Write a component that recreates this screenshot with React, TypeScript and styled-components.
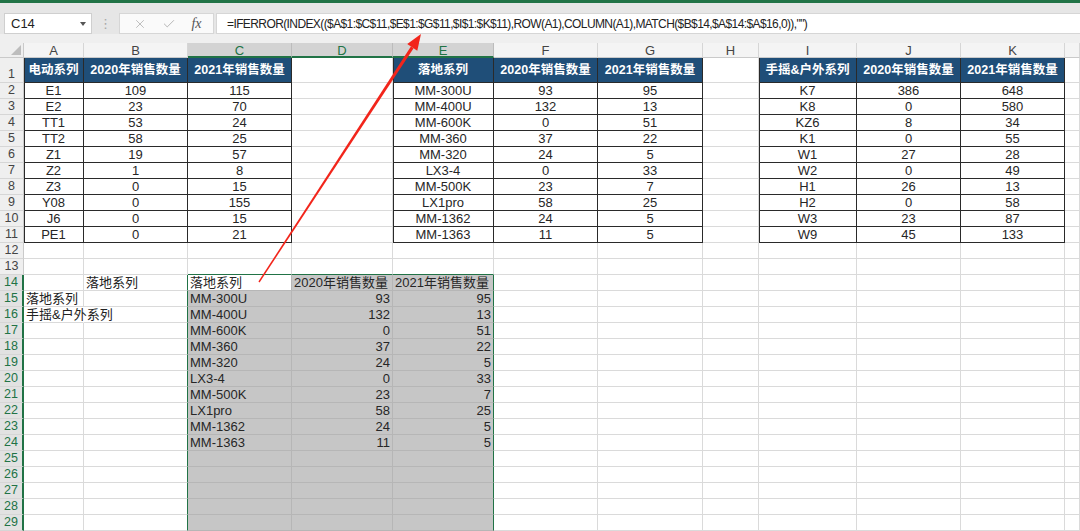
import React from 'react'
import styled, { createGlobalStyle } from 'styled-components'
import { X, Check } from 'lucide-react'

const GREEN = '#217346'
const FONT = `'Liberation Sans', 'Noto Sans CJK SC', sans-serif`

const GlobalStyle = createGlobalStyle`
  html, body { margin: 0; padding: 0; background: #fff; overflow: hidden; }
  body { font-family: ${FONT}; }
`

// last column is only a sliver at the right edge, its letter is out of view
const COLS = [24, 60, 104, 104, 101, 101, 104, 105, 56, 98, 104, 104, 15]
const LETTERS = ['A', 'B', 'C', 'D', 'E', 'F', 'G', 'H', 'I', 'J', 'K', '']
const ROWS = 29

const HEAD = ['2020年销售数量', '2021年销售数量']

const tables = [
  {
    col: 0,
    title: '电动系列',
    rows: [
      ['E1', '109', '115'], ['E2', '23', '70'], ['TT1', '53', '24'], ['TT2', '58', '25'], ['Z1', '19', '57'],
      ['Z2', '1', '8'], ['Z3', '0', '15'], ['Y08', '0', '155'], ['J6', '0', '15'], ['PE1', '0', '21'],
    ],
  },
  {
    col: 4,
    title: '落地系列',
    rows: [
      ['MM-300U', '93', '95'], ['MM-400U', '132', '13'], ['MM-600K', '0', '51'], ['MM-360', '37', '22'],
      ['MM-320', '24', '5'], ['LX3-4', '0', '33'], ['MM-500K', '23', '7'], ['LX1pro', '58', '25'],
      ['MM-1362', '24', '5'], ['MM-1363', '11', '5'],
    ],
  },
  {
    col: 8,
    title: '手摇&户外系列',
    rows: [
      ['K7', '386', '648'], ['K8', '0', '580'], ['KZ6', '8', '34'], ['K1', '0', '55'], ['W1', '27', '28'],
      ['W2', '0', '49'], ['H1', '26', '13'], ['H2', '0', '58'], ['W3', '23', '87'], ['W9', '45', '133'],
    ],
  },
]

type Tone = 'plain' | 'table' | 'head' | 'sel' | 'active'
type Align = 'left' | 'center' | 'right'

interface Spec {
  text?: string
  tone: Tone
  align: Align
  right?: string
  bottom?: string
  left?: string
}

const toneStyle: Record<Tone, { bg: string; line: string; color: string }> = {
  plain: { bg: 'transparent', line: '#dadada', color: '#222' },
  table: { bg: '#fff', line: '#2a2a2a', color: '#262626' },
  head: { bg: '#1f4e78', line: '#2a2a2a', color: '#fff' },
  sel: { bg: '#c6c6c6', line: '#b6b6b6', color: '#262626' },
  active: { bg: '#fff', line: '#b6b6b6', color: '#262626' },
}

// selection C14:E29, column index 2..4
const inSel = (r: number, c: number) => r >= 14 && c >= 2 && c <= 4

function cellAt(r: number, c: number): Spec {
  for (const t of tables) {
    if (r <= 11 && c >= t.col && c <= t.col + 2) {
      const i = c - t.col
      const left = i === 0 ? '#2a2a2a' : undefined
      if (r === 1) return { tone: 'head', align: 'center', text: i === 0 ? t.title : HEAD[i - 1], left }
      return { tone: 'table', align: 'center', text: t.rows[r - 2][i], left }
    }
  }
  const spec: Spec = { tone: 'plain', align: 'left' }
  if (inSel(r, c)) {
    spec.tone = r === 14 && c === 2 ? 'active' : 'sel'
    if (c === 4) spec.right = GREEN
    if (r === 14) {
      spec.text = c === 2 ? '落地系列' : HEAD[c - 3]
    } else if (r <= 24) {
      const row = tables[1].rows[r - 15]
      spec.text = row[c - 2]
      if (c > 2) spec.align = 'right'
    }
  }
  if (r === 13 && c >= 2 && c <= 4) spec.bottom = GREEN
  if (r >= 14 && c === 1) spec.right = GREEN
  if (r === 14 && c === 1) spec.text = '落地系列'
  if (r === 15 && c === 0) spec.text = '落地系列'
  if (r === 16 && c === 0) {
    spec.text = '手摇&户外系列'
    spec.right = 'transparent'
  }
  return spec
}

const Page = styled.div`
  position: relative;
  width: 1080px;
  height: 531px;
  overflow: hidden;
  display: flex;
  flex-direction: column;
`

const TopStripe = styled.div`
  height: 3px;
  background: ${GREEN};
`

const FormulaRow = styled.div`
  height: 31px;
  box-sizing: border-box;
  padding: 10px 0 0 4px;
  background: #e6e6e6;
  display: flex;
  align-items: flex-start;
`

const Band = styled.div`
  height: 9px;
  background: #efefef;
`

const NameBox = styled.div`
  width: 88px;
  height: 21px;
  box-sizing: border-box;
  background: #fff;
  border: 1px solid #cfcfcf;
  display: flex;
  align-items: center;
  justify-content: space-between;
  padding: 0 5px 0 6px;
  font-size: 13px;
  color: #222;
`

const Caret = styled.span`
  width: 0;
  height: 0;
  border-left: 3px solid transparent;
  border-right: 3px solid transparent;
  border-top: 4px solid #555;
`

const Grip = styled.div`
  width: 27px;
  height: 21px;
  display: flex;
  align-items: center;
  justify-content: center;
  color: #a8a8a8;
  font-family: 'DejaVu Sans', sans-serif;
  font-size: 13px;
`

const FxBox = styled.div`
  width: 95px;
  height: 21px;
  box-sizing: border-box;
  background: #fafafa;
  border: 1px solid #d6d6d6;
  display: flex;
  align-items: center;
  justify-content: space-around;
  padding: 0 4px 0 6px;
  color: #b0b0b0;
`

const Fx = styled.span`
  font-family: 'Liberation Serif', serif;
  font-style: italic;
  font-size: 14px;
  color: #555;
`

const FormulaInput = styled.div`
  flex: 1;
  margin-left: 2px;
  height: 21px;
  box-sizing: border-box;
  background: #fff;
  border: 1px solid #d6d6d6;
  border-right: none;
  padding-left: 10px;
  display: flex;
  align-items: center;
  font-size: 12px;
  letter-spacing: -0.6px;
  color: #222;
  white-space: nowrap;
  overflow: hidden;
`

const Sheet = styled.div`
  display: grid;
  grid-template-columns: ${COLS.map((w) => `${w}px`).join(' ')};
  grid-template-rows: 15px 25px repeat(${ROWS - 1}, 16px);
  background: #fff;
`

const Corner = styled.div`
  position: relative;
  box-sizing: border-box;
  background: #efefef;
  border-right: 1px solid #cacaca;
  border-bottom: 1px solid #cacaca;
  display: flex;
  align-items: flex-end;
  justify-content: flex-end;
  padding: 0 2px 2px 0;
  &::after {
    content: '';
    width: 0;
    height: 0;
    border-left: 10px solid transparent;
    border-bottom: 10px solid #bdbdbd;
  }
`

const ColHead = styled.div<{ $sel?: boolean }>`
  box-sizing: border-box;
  background: ${(p) => (p.$sel ? '#d3d3d3' : '#f4f4f4')};
  border-right: 1px solid ${(p) => (p.$sel ? '#bcbcbc' : '#d6d6d6')};
  border-bottom: ${(p) => (p.$sel ? `2px solid ${GREEN}` : '1px solid #cacaca')};
  color: ${(p) => (p.$sel ? GREEN : '#444')};
  font-size: 13px;
  line-height: 15px;
  text-align: center;
`

const RowHead = styled.div<{ $sel?: boolean }>`
  box-sizing: border-box;
  background: ${(p) => (p.$sel ? '#e2e2e2' : '#efefef')};
  border-right: ${(p) => (p.$sel ? `2px solid ${GREEN}` : '1px solid #cacaca')};
  border-bottom: 1px solid #d6d6d6;
  color: ${(p) => (p.$sel ? GREEN : '#444')};
  font-size: 12.5px;
  display: flex;
  align-items: flex-end;
  justify-content: center;
  line-height: 15px;
`

const Cell = styled.div<{ $tone: Tone; $align: Align; $right?: string; $bottom?: string; $left?: string }>`
  box-sizing: border-box;
  min-width: 0;
  background: ${(p) => toneStyle[p.$tone].bg};
  color: ${(p) => toneStyle[p.$tone].color};
  border-right: 1px solid ${(p) => p.$right ?? toneStyle[p.$tone].line};
  border-bottom: 1px solid ${(p) => p.$bottom ?? toneStyle[p.$tone].line};
  box-shadow: ${(p) => (p.$left ? `inset 1px 0 0 ${p.$left}` : 'none')};
  font-size: ${(p) => (p.$tone === 'head' ? '12.5px' : '13px')};
  font-weight: ${(p) => (p.$tone === 'head' ? 700 : 400)};
  display: flex;
  align-items: ${(p) => (p.$tone === 'head' ? 'center' : 'flex-end')};
  justify-content: ${(p) => (p.$align === 'left' ? 'flex-start' : p.$align === 'right' ? 'flex-end' : 'center')};
  padding: ${(p) => (p.$tone === 'head' ? '0' : '0 2px 0 2px')};
  line-height: 15px;
  white-space: nowrap;
  overflow: visible;
  position: relative;
`

const Arrow = styled.svg`
  position: absolute;
  left: 0;
  top: 0;
  pointer-events: none;
`

function arrowShapes() {
  const tail = [259, 282]
  const tip = [421, 34]
  const dx = tip[0] - tail[0]
  const dy = tip[1] - tail[1]
  const len = Math.hypot(dx, dy)
  const u = [dx / len, dy / len]
  const n = [-u[1], u[0]]
  const headLen = 16
  const base = [tip[0] - u[0] * headLen, tip[1] - u[1] * headLen]
  const pt = (p: number[], k: number) => `${p[0] + n[0] * k},${p[1] + n[1] * k}`
  const shaft = [pt(tail, 0.7), pt(tail, -0.7), pt(base, -1.6), pt(base, 1.6)].join(' ')
  const head = [`${tip[0]},${tip[1]}`, pt(base, 6), pt(base, -6)].join(' ')
  return { shaft, head }
}

export default function App() {
  const { shaft, head } = arrowShapes()
  const cells: React.ReactNode[] = []
  cells.push(<Corner key="corner" />)
  LETTERS.forEach((l, c) => cells.push(<ColHead key={`h${c}`} $sel={c >= 2 && c <= 4}>{l}</ColHead>))
  for (let r = 1; r <= ROWS; r++) {
    cells.push(<RowHead key={`r${r}`} $sel={r >= 14}>{r}</RowHead>)
    LETTERS.forEach((_, c) => {
      const s = cellAt(r, c)
      cells.push(
        <Cell key={`${c}-${r}`} $tone={s.tone} $align={s.align} $right={s.right} $bottom={s.bottom} $left={s.left}>
          {s.text}
        </Cell>
      )
    })
  }

  return (
    <Page>
      <GlobalStyle />
      <TopStripe />
      <FormulaRow>
        <NameBox>
          C14
          <Caret />
        </NameBox>
        <Grip>⋮</Grip>
        <FxBox>
          <X size={14} strokeWidth={1.4} />
          <Check size={14} strokeWidth={1.6} />
          <Fx>fx</Fx>
        </FxBox>
        <FormulaInput>=IFERROR(INDEX(($A$1:$C$11,$E$1:$G$11,$I$1:$K$11),ROW(A1),COLUMN(A1),MATCH($B$14,$A$14:$A$16,0)),"")</FormulaInput>
      </FormulaRow>
      <Band />
      <Sheet>{cells}</Sheet>
      <Arrow width={1080} height={531} viewBox="0 0 1080 531">
        <polygon points={shaft} fill="#f2251b" />
        <polygon points={head} fill="#f2251b" />
      </Arrow>
    </Page>
  )
}
